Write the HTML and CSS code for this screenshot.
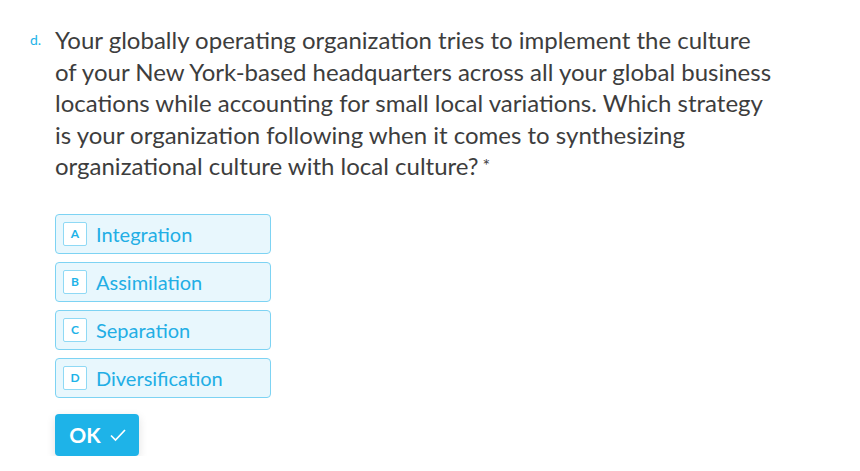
FILE: index.html
```html
<!DOCTYPE html>
<html>
<head>
<meta charset="utf-8">
<link rel="stylesheet" href="styles.css">
</head>
<body>
<div class="question">
  <div class="qhead">
    <span class="num">d.</span>
    <h1 class="qtext">Your globally operating organization tries to implement the culture of your New York-based headquarters across all your global business locations while accounting for small local variations. Which strategy is your organization following when it comes to synthesizing organizational culture with local culture?<span class="req">*</span></h1>
  </div>
  <div class="options">
    <div class="option"><span class="key">A</span><span class="label">Integration</span></div>
    <div class="option"><span class="key">B</span><span class="label">Assimilation</span></div>
    <div class="option"><span class="key">C</span><span class="label">Separation</span></div>
    <div class="option"><span class="key">D</span><span class="label">Diversification</span></div>
  </div>
  <button class="ok">OK <svg width="18" height="14" viewBox="0 0 18 14"><path d="M2 7.5 L6.5 12 L16 2" fill="none" stroke="#fff" stroke-width="1.7"/></svg></button>
</div>
</body>
</html>
```
FILE: styles.css
```css
html, body { margin: 0; padding: 0; background: #fff; }
body { font-family: Lato, "Open Sans", sans-serif; }
.question { padding: 24px 0 0 30px; }
.qhead { display: flex; align-items: flex-start; }
.num { width: 25px; font-size: 14px; color: #1eb3e8; line-height: 32px; padding-top: 0; }
.qtext { margin: 0; width: 720px; font-size: 24px; font-weight: 400; line-height: 31.6px; color: #3d3d3d; }
.req { color: #3d3d3d; font-size: 18px; margin-left: 4px; vertical-align: 3px; }
.options { margin: 32px 0 0 25px; display: flex; flex-direction: column; gap: 8px; }
.option { box-sizing: border-box; width: 216px; height: 40px; background: #e8f7fd; border: 1px solid #7dd3f3; border-radius: 4px; display: flex; align-items: center; padding-left: 7px; }
.key { box-sizing: border-box; width: 24px; height: 24px; background: #fff; border: 1px solid #8fd9f5; border-radius: 2px; display: flex; align-items: center; justify-content: center; font-size: 12px; font-weight: 700; color: #1eb3e8; }
.label { margin-left: 9px; font-size: 20px; color: #22aee5; }
.ok { margin: 16px 0 0 25px; box-sizing: border-box; width: 84px; height: 42px; border: none; border-radius: 4px; background: #1eb3e8; color: #fff; font-family: Lato, sans-serif; font-size: 21px; font-weight: 700; display: flex; align-items: center; justify-content: center; gap: 8px; padding: 0 0 0 2px; box-shadow: 0 3px 10px rgba(0,0,0,0.12); }
```
